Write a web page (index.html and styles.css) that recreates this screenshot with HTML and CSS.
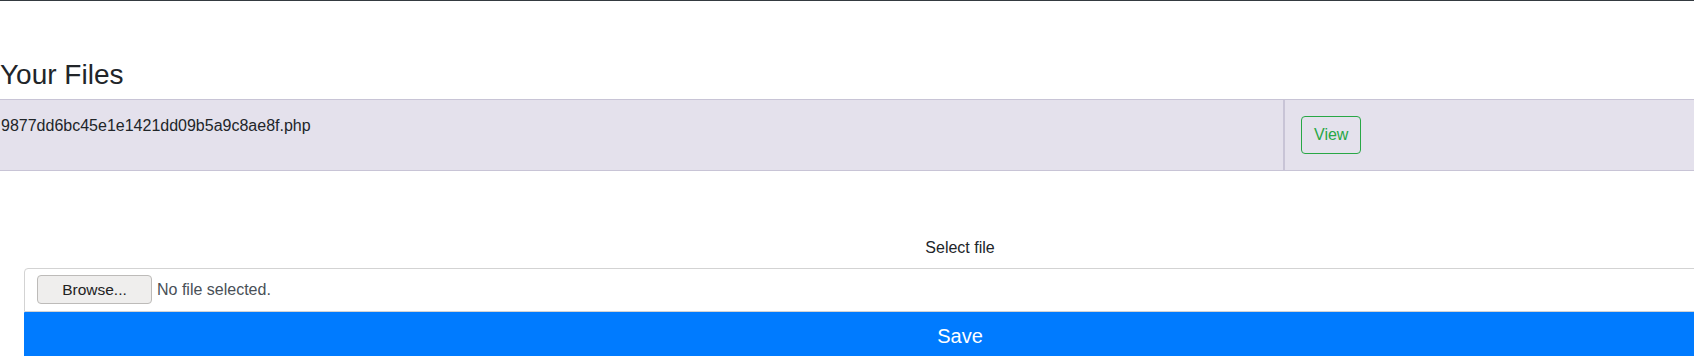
FILE: index.html
```html
<!DOCTYPE html>
<html lang="en">
<head>
  <meta charset="UTF-8">
  <title>Your Files</title>
  <link rel="stylesheet" href="styles.css">
</head>
<body>

<div class="page">
  <div class="topbar"></div>

  <h3>Your Files</h3>

  <table class="files">
    <colgroup>
      <col class="col-name">
      <col>
    </colgroup>
    <tbody>
    <tr>
      <td class="file-name">9877dd6bc45e1e1421dd09b5a9c8ae8f.php</td>
      <td class="file-action"><button class="btn-view">View</button></td>
    </tr>
    </tbody>
  </table>

  <form class="upload">
    <label class="upload-label" for="fileInput">Select file</label>
    <div class="file-box" id="fileInput">
      <span class="browse">Browse...</span>
      <span class="file-status">No file selected.</span>
    </div>
    <button type="button" class="btn-save">Save</button>
  </form>
</div>

</body>
</html>
```

FILE: styles.css
```css
html {
  overflow: hidden;
}

body {
  margin: 0;
  font-family: "Liberation Sans", Arial, sans-serif;
  color: #212529;
  background-color: #fff;
}

.page {
  width: 1920px;
}

.topbar {
  border-top: 1px solid #343a40;
}

h3 {
  font-size: 28px;
  font-weight: 500;
  line-height: 1.2;
  margin: 57px 0 7px 0;
}

.files {
  width: 100%;
  border-collapse: collapse;
  table-layout: fixed;
  background-color: #e4e1ec;
}

.col-name {
  width: 1284px;
}

.files td {
  font-size: 16px;
  line-height: 20px;
  padding: 16px;
  vertical-align: top;
  border-top: 1px solid #c8c4d6;
  border-bottom: 1px solid #c8c4d6;
}

.files td.file-name {
  padding-left: 1px;
  border-right: 2px solid #c8c4d6;
}

.btn-view {
  font-family: "Liberation Sans", Arial, sans-serif;
  font-size: 16px;
  line-height: 24px;
  padding: 6px 12px;
  color: #28a745;
  background: transparent;
  border: 1px solid #28a745;
  border-radius: 4px;
  cursor: pointer;
}

.upload {
  margin: 65px 24px 0 24px;
}

.upload-label {
  display: block;
  text-align: center;
  font-size: 16px;
  line-height: 24px;
  margin-bottom: 8px;
}

.file-box {
  display: flex;
  align-items: center;
  height: 30px;
  padding: 6px 12px;
  border: 1px solid #d3d3d3;
  border-radius: 4px 4px 0 0;
  font-size: 16px;
}

.browse {
  box-sizing: border-box;
  width: 115px;
  height: 29px;
  line-height: 27px;
  text-align: center;
  font-size: 15.5px;
  color: #222;
  background-color: #efeeed;
  border: 1px solid #bdbbb9;
  border-radius: 4px;
  margin-right: 5px;
}

.file-status {
  color: #495057;
}

.btn-save {
  display: block;
  width: 100%;
  font-family: "Liberation Sans", Arial, sans-serif;
  font-size: 20px;
  line-height: 30px;
  padding: 8px 16px;
  color: #fff;
  background-color: #007bff;
  border: 1px solid #007bff;
  border-radius: 0 0 4px 4px;
  cursor: pointer;
}
```
